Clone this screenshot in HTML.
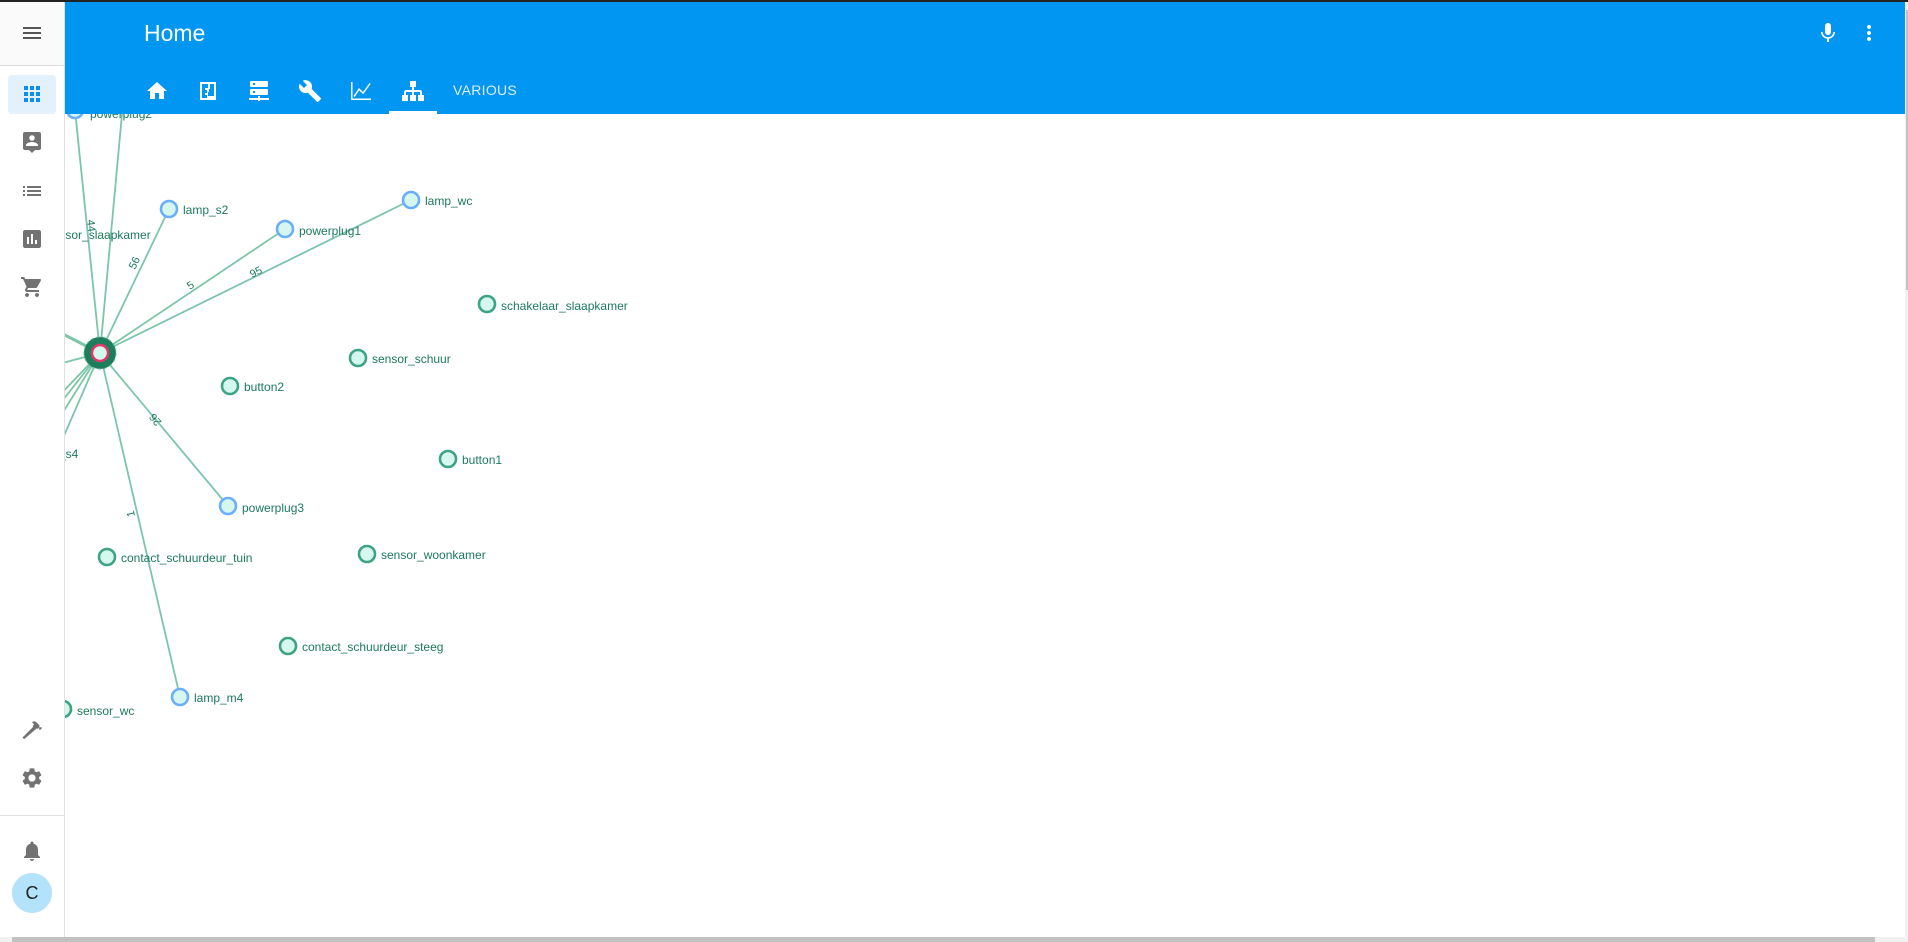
<!DOCTYPE html>
<html><head><meta charset="utf-8"><style>
*{margin:0;padding:0;box-sizing:border-box}
body{width:1908px;height:942px;overflow:hidden;background:#fff;font-family:"Liberation Sans",Roboto,sans-serif;position:relative}
.abs{position:absolute}
</style></head><body>
<svg class="abs" style="left:0;top:0" width="1908" height="942" viewBox="0 0 1908 942">
<g stroke="#7cc6a8" stroke-width="1.8" fill="none">
<line x1="100" y1="353" x2="75" y2="110"/>
<line x1="100" y1="353" x2="122" y2="114"/>
<line x1="100" y1="353" x2="169" y2="209"/>
<line x1="100" y1="353" x2="285" y2="229"/>
<line x1="100" y1="353" x2="411" y2="200"/>
<line x1="100" y1="353" x2="228" y2="506"/>
<line x1="100" y1="353" x2="180" y2="697"/>
<line x1="100" y1="353" x2="55" y2="330" stroke-width="3"/>
<line x1="100" y1="353" x2="55" y2="365"/>
<line x1="100" y1="353" x2="55" y2="400"/>
<line x1="100" y1="353" x2="55" y2="410"/>
<line x1="100" y1="353" x2="55" y2="425"/>
<line x1="100" y1="353" x2="60" y2="445"/>
</g>
<g fill="#1b7a5c" font-size="11" font-family="Liberation Sans,sans-serif">
<text transform="translate(87,220) rotate(84)">44</text>
<text transform="translate(135,270) rotate(-64)">56</text>
<text transform="translate(190,290) rotate(-34)">5</text>
<text transform="translate(252,278) rotate(-26)">95</text>
<text transform="translate(162,422) rotate(230)">26</text>
<text transform="translate(135,516) rotate(257)">1</text>
</g>
<circle cx="100" cy="353" r="16" fill="#1d7d5d"/>
<circle cx="100" cy="353" r="16" fill="none" stroke="#5fb894" stroke-width="1" stroke-dasharray="3 3"/>
<circle cx="100" cy="353" r="8" fill="#d6f7ee" stroke="#e03a6c" stroke-width="2.5"/>
<g stroke-width="2.6" fill="#d6f7ee">
<circle cx="75" cy="110" r="8" stroke="#6aaefc"/>
<circle cx="169" cy="209" r="8" stroke="#6aaefc"/>
<circle cx="411" cy="200" r="8" stroke="#6aaefc"/>
<circle cx="285" cy="229" r="8" stroke="#6aaefc"/>
<circle cx="228" cy="506" r="8" stroke="#6aaefc"/>
<circle cx="180" cy="697" r="8" stroke="#6aaefc"/>
<circle cx="487" cy="304" r="8" stroke="#3da483"/>
<circle cx="358" cy="358" r="8" stroke="#3da483"/>
<circle cx="230" cy="386" r="8" stroke="#3da483"/>
<circle cx="448" cy="459" r="8" stroke="#3da483"/>
<circle cx="107" cy="557" r="8" stroke="#3da483"/>
<circle cx="367" cy="554" r="8" stroke="#3da483"/>
<circle cx="288" cy="646" r="8" stroke="#3da483"/>
<circle cx="63" cy="709" r="8" stroke="#3da483"/>
</g>
<g fill="#1b7a5c" font-size="12" font-family="Liberation Sans,sans-serif">
<text x="90" y="118">powerplug2</text>
<text x="183" y="214">lamp_s2</text>
<text x="425" y="205">lamp_wc</text>
<text x="299" y="235">powerplug1</text>
<text x="501" y="310">schakelaar_slaapkamer</text>
<text x="372" y="363">sensor_schuur</text>
<text x="244" y="391">button2</text>
<text x="462" y="464">button1</text>
<text x="242" y="512">powerplug3</text>
<text x="121" y="562">contact_schuurdeur_tuin</text>
<text x="381" y="559">sensor_woonkamer</text>
<text x="302" y="651">contact_schuurdeur_steeg</text>
<text x="194" y="702">lamp_m4</text>
<text x="77" y="715">sensor_wc</text>
<text x="46" y="239">sensor_slaapkamer</text>
<text x="33" y="458">lamp_s4</text>
</g>
</svg>
<div class="abs" style="left:0;top:0;width:1908px;height:2px;background:#222"></div>
<div class="abs" style="left:65px;top:2px;width:1840px;height:112px;background:#0096f2"></div>
<div class="abs" style="left:144px;top:20px;color:#fff;font-size:23px">Home</div>
<div class="abs" style="left:453px;top:82px;color:#dceefc;font-size:14px;letter-spacing:.3px">VARIOUS</div>
<div class="abs" style="left:389px;top:111px;width:48px;height:3px;background:#fff"></div>
<svg class="abs" style="left:0;top:0" width="1908" height="120" viewBox="0 0 1908 120" fill="#fff">
<g transform="translate(145,79)"><path d="M10 20v-6h4v6h5v-8h3L12 3 2 12h3v8z"/></g>
<g transform="translate(196,79)"><path d="M4 3h16v18H4z M6 5v14h5v-3h-2v-2h2v-3H9v-2h4v4h-1v4h6V5h-4v5h-2V5z"/></g>
<g transform="translate(247,79)"><path d="M4 2h16a1 1 0 0 1 1 1v4a1 1 0 0 1-1 1H4a1 1 0 0 1-1-1V3a1 1 0 0 1 1-1zm2 2v2h2V4zM4 10h16a1 1 0 0 1 1 1v4a1 1 0 0 1-1 1H4a1 1 0 0 1-1-1v-4a1 1 0 0 1 1-1zm2 2v2h2v-2zM11 17h2v2h9v2H13v1h-2v-1H2v-2h9z"/></g>
<g transform="translate(298,79)"><path d="M22.7 19l-9.1-9.1c.9-2.3.4-5-1.5-6.9-2-2-5-2.4-7.4-1.3L9 6 6 9 1.6 4.7C.4 7.1.9 10.1 2.9 12.1c1.9 1.9 4.6 2.4 6.9 1.5l9.1 9.1c.4.4 1 .4 1.4 0l2.3-2.3c.5-.4.5-1.1.1-1.4z"/></g>
<g transform="translate(349,79)"><path d="M2 3h1.5v16.5H22V21H2z M4.5 17l5.5-8 4 4 6.5-9 1.2.9-7.5 10.4-4-4L5.7 18z"/></g>
<g transform="translate(401,79)"><path d="M9,2V8H11V11H5C3.89,11 3,11.89 3,13V16H1V22H7V16H5V13H11V16H9V22H15V16H13V13H19V16H17V22H23V16H21V13C21,11.890 20.11,11 19,11H13V8H15V2H9Z"/></g>
<g transform="translate(1816,21)"><path d="M12 14c1.66 0 2.99-1.34 2.99-3L15 5c0-1.66-1.34-3-3-3S9 3.34 9 5v6c0 1.66 1.34 3 3 3zm5.3-3c0 3-2.54 5.1-5.3 5.1S6.7 14 6.7 11H5c0 3.41 2.72 6.23 6 6.72V21h2v-3.28c3.28-.48 6-3.3 6-6.72h-1.7z"/></g>
<g transform="translate(1857,21)"><path d="M12 8c1.1 0 2-.9 2-2s-.9-2-2-2-2 .9-2 2 .9 2 2 2zm0 2c-1.1 0-2 .9-2 2s.9 2 2 2 2-.9 2-2-.9-2-2-2zm0 6c-1.1 0-2 .9-2 2s.9 2 2 2 2-.9 2-2-.9-2-2-2z"/></g>
</svg>
<div class="abs" style="left:0;top:2px;width:65px;height:935px;background:#fff;border-right:1px solid #e0e0e0"></div>
<div class="abs" style="left:0;top:2px;width:64px;height:64px;background:#fafafa;border-bottom:1px solid #e0e0e0"></div>
<div class="abs" style="left:8px;top:75px;width:48px;height:39px;background:#e2f1fc;border-radius:4px"></div>
<div class="abs" style="left:0;top:815px;width:64px;height:1px;background:#e0e0e0"></div>
<div class="abs" style="left:12px;top:873px;width:40px;height:40px;border-radius:50%;background:#b3e2fb;color:#222;font-size:18px;text-align:center;line-height:40px">C</div>
<svg class="abs" style="left:0;top:0" width="65" height="942" viewBox="0 0 65 942" fill="#727272">
<g transform="translate(20,21)" fill="#555"><path d="M3 18h18v-2H3v2zm0-5h18v-2H3v2zm0-7v2h18V6H3z"/></g>
<g transform="translate(20,82)" fill="#0a8ff0"><path d="M4 8h4V4H4v4zm6 12h4v-4h-4v4zm-6 0h4v-4H4v4zm0-6h4v-4H4v4zm6 0h4v-4h-4v4zm6-10v4h4V4h-4zm-6 4h4V4h-4v4zm6 6h4v-4h-4v4zm0 6h4v-4h-4v4z"/></g>
<g transform="translate(20,130)"><path d="M19 2H5a2 2 0 0 0-2 2v14a2 2 0 0 0 2 2h4l3 3 3-3h4a2 2 0 0 0 2-2V4a2 2 0 0 0-2-2zm-7 3.3c1.49 0 2.7 1.21 2.7 2.7 0 1.49-1.21 2.7-2.7 2.7-1.49 0-2.7-1.21-2.7-2.7 0-1.49 1.21-2.7 2.7-2.7zM18 16H6v-.9c0-2 4-3.1 6-3.1s6 1.1 6 3.1v.9z"/></g>
<g transform="translate(20,179)"><path d="M3 13h2v-2H3v2zm0 4h2v-2H3v2zm0-8h2V7H3v2zm4 4h14v-2H7v2zm0 4h14v-2H7v2zM7 7v2h14V7H7z"/></g>
<g transform="translate(20,227)"><path d="M19 3H5c-1.1 0-2 .9-2 2v14c0 1.1.9 2 2 2h14c1.1 0 2-.9 2-2V5c0-1.1-.9-2-2-2zM9 17H7v-7h2v7zm4 0h-2V7h2v10zm4 0h-2v-4h2v4z"/></g>
<g transform="translate(20,275)"><path d="M7 18c-1.1 0-1.99.9-1.99 2S5.9 22 7 22s2-.9 2-2-.9-2-2-2zM1 2v2h2l3.6 7.59-1.35 2.45c-.16.28-.25.61-.25.96 0 1.1.9 2 2 2h12v-2H7.42c-.14 0-.25-.11-.25-.25l.03-.12.9-1.63h7.45c.75 0 1.41-.41 1.75-1.03l3.58-6.49A1.003 1.003 0 0 0 20 4H5.21l-.94-2H1zm16 16c-1.1 0-1.99.9-1.99 2s.89 2 1.99 2 2-.9 2-2-.9-2-2-2z"/></g>
<g transform="translate(20,718)"><path d="M2.5 19.5L13.4 8.6l-.7-.7 1.4-1.4-2.1-2.2c1.2-1.2 3.1-1.2 4.3 0l3.6 3.6-1.4 1.4 2.8 0 .7.7-2.1 2.1-.7-.7V9.6l-1.5 1.4-.7-.7L4.1 21.1z"/></g>
<g transform="translate(20,766)"><path d="M19.14 12.94c.04-.3.06-.61.06-.94 0-.32-.02-.64-.07-.94l2.03-1.58a.49.49 0 0 0 .12-.61l-1.92-3.32a.488.488 0 0 0-.59-.22l-2.39.96c-.5-.38-1.03-.7-1.62-.94l-.36-2.54a.484.484 0 0 0-.48-.41h-3.84c-.24 0-.43.17-.47.41l-.36 2.54c-.59.24-1.13.57-1.62.94l-2.39-.96c-.22-.08-.47 0-.59.22L2.74 8.87c-.12.21-.08.47.12.61l2.03 1.58c-.05.3-.09.63-.09.94s.02.64.07.94l-2.03 1.58a.49.49 0 0 0-.12.61l1.92 3.32c.12.22.37.29.59.22l2.39-.96c.5.38 1.03.7 1.62.94l.36 2.54c.05.24.24.41.48.41h3.84c.24 0 .44-.17.47-.41l.36-2.54c.59-.24 1.13-.56 1.62-.94l2.39.96c.22.08.47 0 .59-.22l1.92-3.32c.12-.22.07-.47-.12-.61l-2.01-1.58zM12 15.6c-1.98 0-3.6-1.62-3.6-3.6s1.62-3.6 3.6-3.6 3.6 1.62 3.6 3.6-1.62 3.6-3.6 3.6z"/></g>
<g transform="translate(20,839)"><path d="M12 22c1.1 0 2-.9 2-2h-4c0 1.1.9 2 2 2zm6-6v-5c0-3.07-1.63-5.64-4.5-6.32V4c0-.83-.67-1.5-1.5-1.5s-1.5.67-1.5 1.5v.68C7.64 5.36 6 7.92 6 11v5l-2 2v1h16v-1l-2-2z"/></g>
</svg>
<div class="abs" style="left:1905px;top:2px;width:3px;height:940px;background:#f1f1f1"></div>
<div class="abs" style="left:1906px;top:10px;width:2px;height:280px;background:#c1c1c1"></div>
<div class="abs" style="left:0;top:937px;width:1908px;height:5px;background:#f1f1f1"></div>
<div class="abs" style="left:12px;top:937px;width:1863px;height:5px;background:#c1c1c1"></div>
</body></html>
